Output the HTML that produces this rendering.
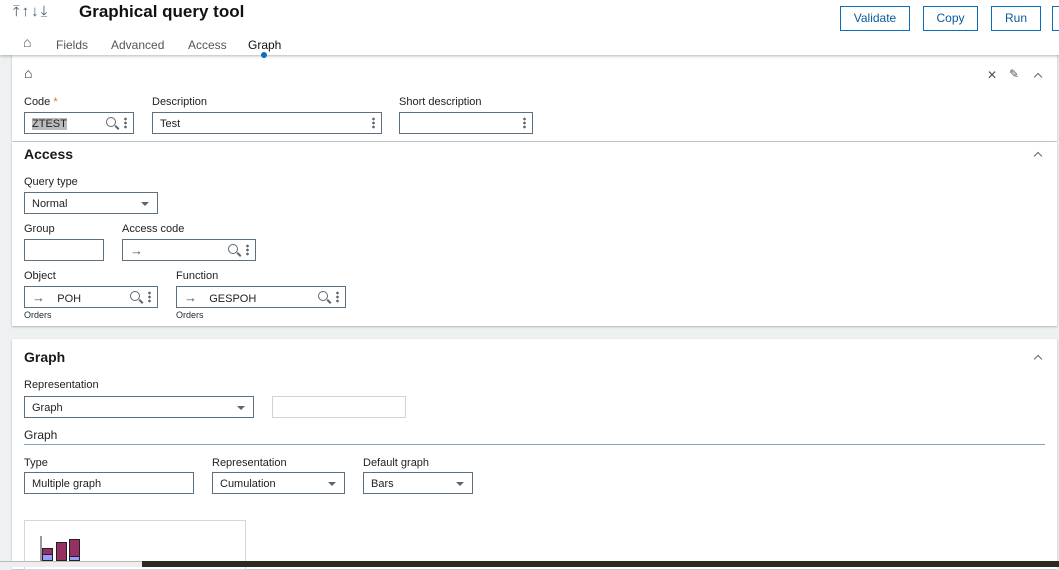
<!DOCTYPE html>
<html><head><style>
*{box-sizing:border-box;margin:0;padding:0}
body{width:1059px;height:567px;overflow:hidden;background:#eef1f1;font-family:"Liberation Sans",sans-serif;position:relative;color:#1e2a30}
.a{position:absolute}
.card{position:absolute;background:#fff;left:12px;width:1045px;box-shadow:0 1px 2px rgba(0,0,0,.25)}
.lbl{position:absolute;font-size:11px;color:#222}
.in{position:absolute;height:22px;border:1px solid #5b7080;background:#fff;font-size:11px;color:#222;padding:5px 7px 0;white-space:nowrap}
.dots{position:absolute;right:6px;top:4px;width:3px;height:12px;background:radial-gradient(circle,#5a6670 1.2px,transparent 1.5px) 0 0/3px 4px repeat-y}
.mag{position:absolute;top:4px;width:10px;height:10px;border:1.5px solid #5a6670;border-radius:50%}
.mag:after{content:"";position:absolute;width:2px;height:5px;background:#5a6670;right:-3px;bottom:-4px;transform:rotate(-45deg)}
.tri{position:absolute;right:8px;top:9px;border-left:4px solid transparent;border-right:4px solid transparent;border-top:4px solid #5a6670}
.h2{position:absolute;font-size:14px;font-weight:bold;color:#1a1a1a}
.btn{position:absolute;top:6px;height:25px;border:1.5px solid #0a6fb8;color:#0a5a9a;font-size:12px;text-align:center;line-height:22px;background:#fff}
.chev{position:absolute;width:6px;height:6px;border-left:1.2px solid #666;border-top:1.2px solid #666;transform:rotate(45deg)}
.arr{color:#555;font-size:13px}
</style></head><body>
<div class="a" style="left:0;top:0;width:1059px;height:55px;background:#fff;box-shadow:0 1px 3px rgba(0,0,0,.3);z-index:2">
 <div class="a" style="left:13px;top:3px;font-size:15px;color:#4a6070;letter-spacing:2px">⤒↑↓⤓</div>
 <div class="a" style="left:79px;top:2px;font-size:17px;font-weight:bold;color:#111">Graphical query tool</div>
 <div class="a" style="left:23px;top:34px;font-size:14px;color:#555">⌂</div>
 <div class="a" style="left:56px;top:38px;font-size:12px;color:#555">Fields</div>
 <div class="a" style="left:111px;top:38px;font-size:12px;color:#555">Advanced</div>
 <div class="a" style="left:188px;top:38px;font-size:12px;color:#555">Access</div>
 <div class="a" style="left:248px;top:38px;font-size:12px;color:#111">Graph</div>
 <div class="a" style="left:261px;top:52px;width:6px;height:6px;border-radius:50%;background:#0a6fb8"></div>
 <div class="btn" style="left:840px;width:70px">Validate</div>
 <div class="btn" style="left:923px;width:55px">Copy</div>
 <div class="btn" style="left:991px;width:50px">Run</div>
 <div class="btn" style="left:1052px;width:20px"></div>
</div>
<div class="card" style="top:50px;height:91px">
 <div class="a" style="left:12px;top:15px;font-size:14px">⌂</div>
 <div class="a" style="left:975px;top:18px;font-size:12px;color:#555">✕</div>
 <div class="a" style="left:997px;top:17px;font-size:12px;color:#555">✎</div>
 <div class="chev" style="left:1023px;top:24px"></div>
 <div class="lbl" style="left:12px;top:46px">Code <span style="color:#f06a1c">*</span></div>
 <div class="in" style="left:12px;top:62px;width:110px"><span style="background:#bbb">ZTEST</span><div class="mag" style="right:17px"></div><div class="dots"></div></div>
 <div class="lbl" style="left:140px;top:46px">Description</div>
 <div class="in" style="left:140px;top:62px;width:230px">Test<div class="dots"></div></div>
 <div class="lbl" style="left:387px;top:46px">Short description</div>
 <div class="in" style="left:387px;top:62px;width:134px"><div class="dots"></div></div>
</div>
<div class="card" style="top:142px;height:184px">
 <div class="h2" style="left:12px;top:4px">Access</div>
 <div class="chev" style="left:1023px;top:11px"></div>
 <div class="lbl" style="left:12px;top:34px">Query type</div>
 <div class="in" style="left:12px;top:50px;width:134px">Normal<div class="tri"></div></div>
 <div class="lbl" style="left:12px;top:81px">Group</div>
 <div class="in" style="left:12px;top:97px;width:80px"></div>
 <div class="lbl" style="left:110px;top:81px">Access code</div>
 <div class="in" style="left:110px;top:97px;width:134px;padding-top:3px"><span class="arr">→</span><div class="mag" style="right:17px"></div><div class="dots"></div></div>
 <div class="lbl" style="left:12px;top:128px">Object</div>
 <div class="in" style="left:12px;top:144px;width:134px;padding-top:3px"><span class="arr">→</span>&nbsp;&nbsp;&nbsp;&nbsp;<span style="font-size:11px">POH</span><div class="mag" style="right:17px"></div><div class="dots"></div></div>
 <div class="a" style="left:12px;top:168px;font-size:9px">Orders</div>
 <div class="lbl" style="left:164px;top:128px">Function</div>
 <div class="in" style="left:164px;top:144px;width:170px;padding-top:3px"><span class="arr">→</span>&nbsp;&nbsp;&nbsp;&nbsp;<span style="font-size:11px">GESPOH</span><div class="mag" style="right:17px"></div><div class="dots"></div></div>
 <div class="a" style="left:164px;top:168px;font-size:9px">Orders</div>
</div>
<div class="card" style="top:339px;height:230px">
 <div class="h2" style="left:12px;top:10px">Graph</div>
 <div class="chev" style="left:1023px;top:17px"></div>
 <div class="lbl" style="left:12px;top:40px">Representation</div>
 <div class="in" style="left:12px;top:57px;width:230px">Graph<div class="tri"></div></div>
 <div class="in" style="left:260px;top:57px;width:134px;border-color:#ccd5da"></div>
 <div class="a" style="left:12px;top:89px;font-size:12px;color:#222">Graph</div>
 <div class="a" style="left:12px;top:105px;width:1021px;height:1px;background:#7fa6c0"></div>
 <div class="lbl" style="left:12px;top:118px">Type</div>
 <div class="in" style="left:12px;top:133px;width:170px">Multiple graph</div>
 <div class="lbl" style="left:200px;top:118px">Representation</div>
 <div class="in" style="left:200px;top:133px;width:133px">Cumulation<div class="tri"></div></div>
 <div class="lbl" style="left:351px;top:118px">Default graph</div>
 <div class="in" style="left:351px;top:133px;width:110px">Bars<div class="tri"></div></div>
 <div class="a" style="left:12px;top:181px;width:222px;height:50px;border:1px solid #cfd8dc"></div>
 <div class="a" style="left:28px;top:197px;width:2px;height:25px;background:#999"></div>
 <div class="a" style="left:30px;top:209px;width:11px;height:13px;background:#9a9aff;border:1px solid #222"></div>
 <div class="a" style="left:30px;top:209px;width:11px;height:7px;background:#963063;border:1px solid #222"></div>
 <div class="a" style="left:44px;top:203px;width:11px;height:19px;background:#963063;border:1px solid #222"></div>
 <div class="a" style="left:57px;top:200px;width:11px;height:22px;background:#9a9aff;border:1px solid #222"></div>
 <div class="a" style="left:57px;top:200px;width:11px;height:18px;background:#963063;border:1px solid #222"></div>
</div>
<div class="a" style="left:0;top:561px;width:142px;height:6px;background:#eee;border-top:1px solid #bbb"></div>
<div class="a" style="left:142px;top:561px;width:917px;height:6px;background:#2b2b20"></div>
</body></html>
